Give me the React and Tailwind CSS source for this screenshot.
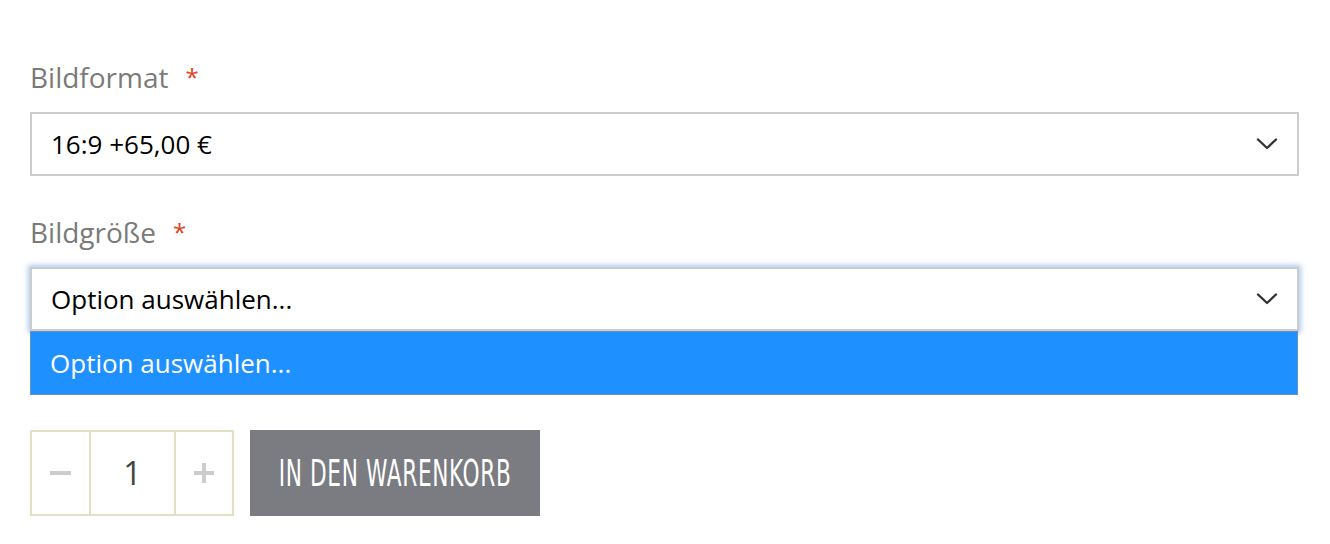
const sans = { fontFamily: '"Open Sans", "Noto Sans", sans-serif' };

function Label({ children }) {
  return (
    <div className="text-[28px] leading-none text-[#7a7a7a] flex items-center gap-[17px]" style={sans}>
      <span>{children}</span>
      <span className="text-[#e2401c] text-[24px]">*</span>
    </div>
  );
}

function Chevron() {
  return (
    <svg width="22" height="14" viewBox="0 0 22 14" fill="none" className="text-[#333]">
      <path d="M2 2.5 L11 11 L20 2.5" stroke="currentColor" strokeWidth="2.4" strokeLinecap="round" strokeLinejoin="round" />
    </svg>
  );
}

function Select({ value, focused }) {
  return (
    <div
      className={`h-16 flex items-center justify-between pl-[19px] pr-[19px] border-2 border-[#cccccc] bg-white ${
        focused ? 'shadow-[0_0_5px_2px_rgba(120,170,230,0.6)]' : ''
      }`}
    >
      <span className="text-[26px] text-black" style={sans}>{value}</span>
      <Chevron />
    </div>
  );
}

export default function App() {
  return (
    <div className="bg-white w-[1330px] h-[544px] pl-[30px] pr-[31px] pt-[63px]">
      <Label>Bildformat</Label>
      <div className="mt-[21px]">
        <Select value="16:9 +65,00 €" />
      </div>

      <div className="mt-[42px]">
        <Label>Bildgröße</Label>
      </div>
      <div className="mt-[21px]">
        <Select value="Option auswählen..." focused />
        <div className="h-16 bg-[#1e90ff] border border-[#6a8fc4] mr-[1px] flex items-center pl-[19px]">
          <span className="text-[26px] text-white" style={sans}>Option auswählen...</span>
        </div>
      </div>

      <div className="mt-[35px] flex gap-4">
        <div className="flex h-[86px] border-2 border-[#e3dfc3]">
          <button className="w-[57px] flex items-center justify-center">
            <span className="block w-[21px] h-1 bg-[#cccccc]" />
          </button>
          <div className="w-[87px] border-x-2 border-[#e3dfc3] flex items-center justify-center text-[32px] text-[#444]" style={sans}>
            1
          </div>
          <button className="w-[56px] flex items-center justify-center relative">
            <span className="block w-5 h-1 bg-[#cccccc]" />
            <span className="absolute block w-1 h-5 bg-[#cccccc]" />
          </button>
        </div>
        <button className="w-[290px] h-[86px] bg-[#7a7c81] text-white flex items-center justify-center overflow-hidden">
          <span
            className="inline-block whitespace-nowrap text-[37px] leading-none tracking-[1px] scale-x-[0.65]"
            style={{ fontFamily: '"DejaVu Sans Condensed", "DejaVu Sans", sans-serif', fontStretch: 'condensed' }}
          >
            IN DEN WARENKORB
          </span>
        </button>
      </div>
    </div>
  );
}
